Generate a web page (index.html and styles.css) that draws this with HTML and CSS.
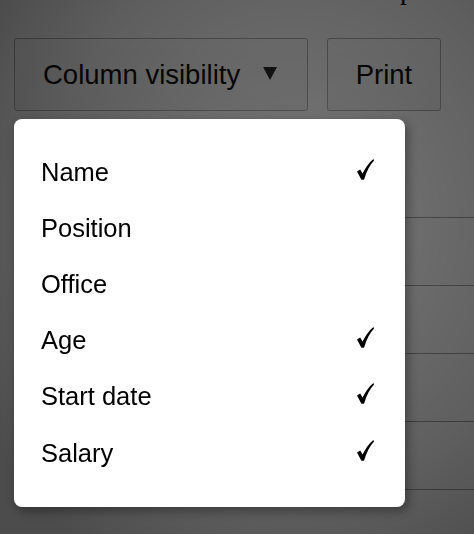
FILE: index.html
```html
<!DOCTYPE html>
<html lang="en">
<head>
<meta charset="utf-8">
<title>Column visibility</title>
<link rel="stylesheet" href="styles.css">
</head>
<body>
<div class="page">
  <div class="caption"><span class="caption-text">p</span></div>
  <div class="toolbar">
    <button class="btn btn-colvis" type="button">
      <span>Column visibility</span>
      <svg class="caret" width="14" height="13" viewBox="0 0 14 13"><polygon points="0,0 14,0 7,13" fill="#2b2b2b"/></svg>
    </button>
    <button class="btn btn-print" type="button">Print</button>
  </div>
  <div class="table">
    <div class="row"></div>
    <div class="row"></div>
    <div class="row"></div>
    <div class="row"></div>
    <div class="row"></div>
  </div>
</div>
<div class="overlay"></div>
<ul class="menu">
  <li class="item"><span>Name</span><svg class="check" width="17" height="21" viewBox="0 0 17 21"><path d="M0 12.5 L3.2 10.6 L5.6 14.6 C8.2 8.8 12 3.6 16.4 0 L17 1.4 C12.8 6 9.4 12.2 7 20.8 L4.4 20.8 Z" fill="#000"/></svg></li>
  <li class="item"><span>Position</span></li>
  <li class="item"><span>Office</span></li>
  <li class="item"><span>Age</span><svg class="check" width="17" height="21" viewBox="0 0 17 21"><path d="M0 12.5 L3.2 10.6 L5.6 14.6 C8.2 8.8 12 3.6 16.4 0 L17 1.4 C12.8 6 9.4 12.2 7 20.8 L4.4 20.8 Z" fill="#000"/></svg></li>
  <li class="item"><span>Start date</span><svg class="check" width="17" height="21" viewBox="0 0 17 21"><path d="M0 12.5 L3.2 10.6 L5.6 14.6 C8.2 8.8 12 3.6 16.4 0 L17 1.4 C12.8 6 9.4 12.2 7 20.8 L4.4 20.8 Z" fill="#000"/></svg></li>
  <li class="item"><span>Salary</span><svg class="check" width="17" height="21" viewBox="0 0 17 21"><path d="M0 12.5 L3.2 10.6 L5.6 14.6 C8.2 8.8 12 3.6 16.4 0 L17 1.4 C12.8 6 9.4 12.2 7 20.8 L4.4 20.8 Z" fill="#000"/></svg></li>
</ul>
</body>
</html>
```

FILE: styles.css
```css
html, body {
  margin: 0;
  padding: 0;
  background: #ffffff;
  font-family: "Liberation Sans", Arial, sans-serif;
  color: #000;
}

.page {
  width: 474px;
  height: 534px;
  overflow: hidden;
}

.caption {
  height: 8px;
  overflow: hidden;
  padding-left: 400px;
}

.caption-text {
  display: block;
  font-family: "Liberation Serif", "Times New Roman", serif;
  font-size: 28px;
  line-height: 28px;
  margin-top: -24px;
  color: #000;
}

.toolbar {
  display: flex;
  gap: 19px;
  padding: 30px 14px 0;
}

.btn {
  box-sizing: border-box;
  height: 73px;
  display: flex;
  align-items: center;
  border: 1px solid #b2b2b2;
  border-radius: 3px;
  background: linear-gradient(#ffffff, #f6f6f6);
  font-family: "Liberation Sans", Arial, sans-serif;
  font-size: 27.5px;
  color: #111;
  margin: 0;
}

.btn-colvis {
  width: 294px;
  padding: 0 0 0 28px;
  gap: 23px;
}

.caret {
  display: block;
  margin-top: -2px;
}

.btn-print {
  width: 114px;
  justify-content: center;
  padding: 0;
}

.table {
  margin: 39px 0 0 14px;
}

.row {
  height: 67px;
  border-bottom: 1px solid #a6a6a6;
}

.overlay {
  position: fixed;
  inset: 0;
  background: radial-gradient(ellipse 75% 75% at 62% 42%, rgba(0,0,0,0.52) 0%, rgba(0,0,0,0.63) 70%, rgba(0,0,0,0.7) 100%);
}

.menu {
  position: absolute;
  left: 14px;
  top: 119px;
  width: 391px;
  box-sizing: border-box;
  margin: 0;
  padding: 25px 31px 26px 27px;
  list-style: none;
  background: #ffffff;
  border-radius: 8px;
  box-shadow: 3px 4px 10px 1px rgba(0,0,0,0.3);
}

.item {
  height: 56.2px;
  display: flex;
  align-items: center;
  justify-content: space-between;
  font-size: 25.5px;
  color: #000;
}

.check {
  display: block;
  margin-bottom: 6px;
}
```
